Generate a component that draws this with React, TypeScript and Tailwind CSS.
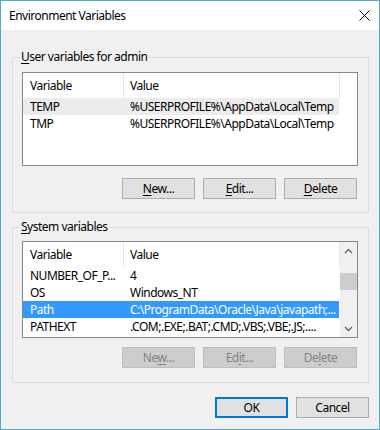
import React from 'react';

type Row = { name: string; value: string; state?: 'hover' | 'selected' };

const userRows: Row[] = [
  { name: 'TEMP', value: '%USERPROFILE%\\AppData\\Local\\Temp', state: 'hover' },
  { name: 'TMP', value: '%USERPROFILE%\\AppData\\Local\\Temp' },
];

const systemRows: Row[] = [
  { name: 'NUMBER_OF_P...', value: '4' },
  { name: 'OS', value: 'Windows_NT' },
  { name: 'Path', value: 'C:\\ProgramData\\Oracle\\Java\\javapath;...', state: 'selected' },
  { name: 'PATHEXT', value: '.COM;.EXE;.BAT;.CMD;.VBS;.VBE;.JS;....' },
];

// label with an access-key letter underlined
const Label: React.FC<{ pre: string; k: string; post: string }> = ({ pre, k, post }) => (
  <span>
    {pre}
    <span className="underline underline-offset-2">{k}</span>
    {post}
  </span>
);

const Button: React.FC<{ children: React.ReactNode; disabled?: boolean; primary?: boolean }> = ({
  children,
  disabled,
  primary,
}) => {
  let cls = 'border-[#adadad] bg-[#e1e1e1] text-black';
  if (disabled) cls = 'border-[#bfbfbf] bg-[#cccccc] text-[#838383]';
  if (primary) cls = 'border-2 border-[#0078d7] bg-[#e1e1e1] text-black';
  return (
    <button className={`flex h-[21px] w-[73px] items-center justify-center border text-[12px] leading-none tracking-[-0.5px] ${cls}`}>
      {children}
    </button>
  );
};

const Chevron: React.FC<{ down?: boolean }> = ({ down }) => (
  <svg width="9" height="6" viewBox="0 0 9 6" className={down ? 'rotate-180' : ''}>
    <path d="M1 5 L4.5 1.5 L8 5" fill="none" stroke="#606060" strokeWidth="1.3" />
  </svg>
);

const ListView: React.FC<{ rows: Row[]; height: string; scroll?: boolean }> = ({ rows, height, scroll }) => (
  <div className={`flex w-[336px] border border-[#828790] bg-white ${height}`}>
    <div className="flex-1 overflow-hidden">
      <div className="flex h-[25px] items-center">
        <div className="flex h-full w-[101px] items-center border-r border-[#e5e5e5] pl-[7px]">Variable</div>
        <div className="flex h-full w-[216px] items-center border-r border-[#e5e5e5] pl-[6px]">Value</div>
      </div>
      {rows.map((r) => (
        <div
          key={r.name}
          className={`flex h-[17px] w-[316px] items-center whitespace-nowrap ${
            r.state === 'selected' ? 'bg-[#3399ff] text-white' : r.state === 'hover' ? 'bg-[#ececec]' : ''
          }`}
        >
          <div className="w-[100px] overflow-hidden pl-[7px]">{r.name}</div>
          <div className="w-[216px] overflow-hidden pl-[7px]">{r.value}</div>
        </div>
      ))}
    </div>
    {scroll && (
      <div className="flex w-[17px] flex-col bg-[#f0f0f0]">
        <div className="flex h-[17px] items-center justify-center">
          <Chevron />
        </div>
        <div className="mt-[14px] h-[17px] bg-[#cdcdcd]" />
        <div className="flex-1" />
        <div className="flex h-[17px] items-center justify-center">
          <Chevron down />
        </div>
      </div>
    )}
  </div>
);

export default function App() {
  return (
    <div className="flex h-[430px] w-[380px] flex-col border border-[#4fa9c8] bg-[#f0f0f0] font-['Noto_Sans',sans-serif] text-[12px] tracking-[-0.5px] text-black">
      <div className="flex h-[29px] items-center justify-between bg-white pl-[8px] pr-[9px]">
        <span>Environment Variables</span>
        <svg width="11" height="11" viewBox="0 0 11 11">
          <path d="M0.5 0.5 L10.5 10.5 M10.5 0.5 L0.5 10.5" stroke="#000" strokeWidth="1" />
        </svg>
      </div>

      <fieldset className="ml-[11px] mt-[19px] w-[357px] border border-[#dcdcdc] pb-[13px] pl-[9px] pt-[7px]">
        <legend className="-ml-[3px] h-[16px] px-[2px] leading-[16px]">
          <Label pre="" k="U" post="ser variables for admin" />
        </legend>
        <ListView rows={userRows} height="h-[94px]" />
        <div className="mt-[12px] flex w-[335px] justify-end gap-[8px]">
          <Button>
            <Label pre="" k="N" post="ew..." />
          </Button>
          <Button>
            <Label pre="" k="E" post="dit..." />
          </Button>
          <Button>
            <Label pre="" k="D" post="elete" />
          </Button>
        </div>
      </fieldset>

      <fieldset className="ml-[11px] mt-[6px] w-[357px] border border-[#dcdcdc] pb-[14px] pl-[9px] pt-[6px]">
        <legend className="-ml-[3px] h-[16px] px-[2px] leading-[16px]">
          <Label pre="" k="S" post="ystem variables" />
        </legend>
        <ListView rows={systemRows} height="h-[97px]" scroll />
        <div className="mt-[9px] flex w-[335px] justify-end gap-[8px]">
          <Button disabled>
            <Label pre="Ne" k="w" post="..." />
          </Button>
          <Button disabled>
            <Label pre="Ed" k="i" post="t..." />
          </Button>
          <Button disabled>
            <Label pre="De" k="l" post="ete" />
          </Button>
        </div>
      </fieldset>

      <div className="mt-[14px] flex w-[368px] justify-end gap-[8px]">
        <Button primary>OK</Button>
        <Button>Cancel</Button>
      </div>
    </div>
  );
}
